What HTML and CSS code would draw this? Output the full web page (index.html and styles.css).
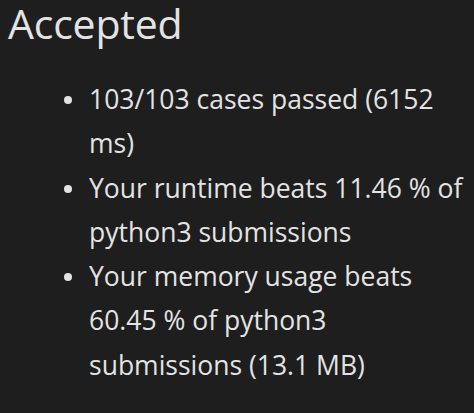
FILE: index.html
```html
<!DOCTYPE html>
<html lang="en">
<head>
<meta charset="utf-8">
<title>Accepted</title>
<link rel="stylesheet" href="styles.css">
</head>
<body>
<div class="result">
  <h2 class="title">Accepted</h2>
  <ul class="details">
    <li>103/103 cases passed (6152 ms)</li>
    <li>Your runtime beats 11.46 % of python3 submissions</li>
    <li>Your memory usage beats 60.45 % of python3 submissions (13.1 MB)</li>
  </ul>
</div>
</body>
</html>
```
FILE: styles.css
```css
html, body {
  margin: 0;
  padding: 0;
  background: #1e1e1e;
}
body {
  font-family: "Open Sans", "Noto Sans", sans-serif;
  color: #e3e3e3;
}
.result {
  padding: 0 4px 0 8px;
}
.title {
  margin: 0;
  font-size: 41px;
  font-weight: 400;
  line-height: 46px;
  letter-spacing: -0.2px;
}
.details {
  margin: 31px 0 0 0;
  padding-left: 81px;
  font-size: 26.5px;
  line-height: 44.3px;
  list-style: none;
}
.details li {
  position: relative;
}
.details li::before {
  content: "";
  position: absolute;
  left: -25px;
  top: 19px;
  width: 8px;
  height: 8px;
  border-radius: 50%;
  background: #e3e3e3;
}
```
